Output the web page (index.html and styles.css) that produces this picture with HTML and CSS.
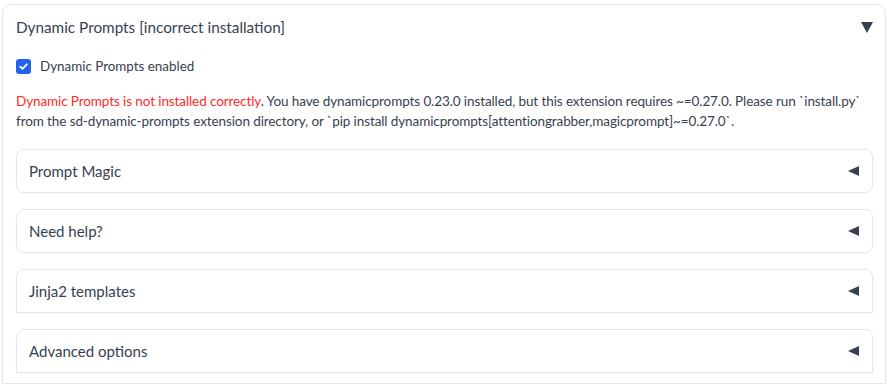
FILE: index.html
```html
<!DOCTYPE html>
<html lang="en">
<head>
    <meta charset="UTF-8">
    <meta name="viewport" content="width=device-width, initial-scale=1.0">
    <title>Dynamic Prompts</title>
    <link rel="stylesheet" href="styles.css">
</head>
<body>
    <div class="panel">
        <div class="panel-head">
            <span class="panel-title">Dynamic Prompts [incorrect installation]</span>
            <span class="tri-down"></span>
        </div>
        <div class="panel-body">
            <label class="check-row">
                <span class="checkbox">
                    <svg width="11" height="11" viewBox="0 0 12 12"><path d="M2.5 6.3 L5 8.6 L9.6 3.6" fill="none" stroke="#fff" stroke-width="2" stroke-linecap="round" stroke-linejoin="round"/></svg>
                </span>
                Dynamic Prompts enabled
            </label>
            <p class="warning"><span class="err">Dynamic Prompts is not installed correctly</span>. You have dynamicprompts 0.23.0 installed, but this extension requires ~=0.27.0. Please run `install.py` from the sd-dynamic-prompts extension directory, or `pip install dynamicprompts[attentiongrabber,magicprompt]~=0.27.0`.</p>
            <div class="sections">
                <div class="section">
                    <span>Prompt Magic</span>
                    <span class="tri-left"></span>
                </div>
                <div class="section">
                    <span>Need help?</span>
                    <span class="tri-left"></span>
                </div>
                <div class="section flat-bottom">
                    <span>Jinja2 templates</span>
                    <span class="tri-left"></span>
                </div>
                <div class="section flat-bottom">
                    <span>Advanced options</span>
                    <span class="tri-left"></span>
                </div>
            </div>
        </div>
    </div>
</body>
</html>
```

FILE: styles.css
```css
body {
    margin: 0;
    background: #fff;
    font-family: 'Lato', 'Open Sans', sans-serif;
    color: #374151;
}
.panel {
    margin: 4px 3px 0 2px;
    border: 1px solid #e5e7eb;
    border-radius: 8px 8px 0 0;
    height: 380px;
    box-sizing: border-box;
}
.panel-head {
    display: flex;
    justify-content: space-between;
    align-items: center;
    padding: 11px 12px 0 13px;
    height: 33px;
    box-sizing: border-box;
    font-size: 15.3px;
    line-height: 22px;
}
.tri-down {
    width: 0;
    height: 0;
    border-left: 6.5px solid transparent;
    border-right: 6.5px solid transparent;
    border-top: 11px solid #374151;
    margin-top: 1px;
}
.tri-left {
    width: 0;
    height: 0;
    border-top: 5px solid transparent;
    border-bottom: 5px solid transparent;
    border-right: 11px solid #374151;
}
.panel-body {
    padding: 0 12px 0 13px;
}
.check-row {
    display: flex;
    align-items: center;
    gap: 9px;
    margin-top: 18px;
    font-size: 13.4px;
    line-height: 20px;
}
.checkbox {
    width: 15px;
    height: 15px;
    border-radius: 3px;
    background: #2563eb;
    display: flex;
    align-items: center;
    justify-content: center;
}
.warning {
    margin: 15px 0 0;
    font-size: 13.5px;
    letter-spacing: -0.1px;
    line-height: 20px;
}
.err {
    color: #ff2a2a;
}
.sections {
    display: flex;
    flex-direction: column;
    gap: 16px;
    margin-top: 18px;
}
.section {
    display: flex;
    justify-content: space-between;
    align-items: center;
    height: 44px;
    box-sizing: border-box;
    padding: 0 13px 0 12px;
    border: 1px solid #e5e7eb;
    border-radius: 8px;
    box-shadow: 0 1px 2px rgba(0, 0, 0, 0.04);
    font-size: 15px;
}
.section.flat-bottom {
    border-radius: 8px 8px 0 0;
}
```
